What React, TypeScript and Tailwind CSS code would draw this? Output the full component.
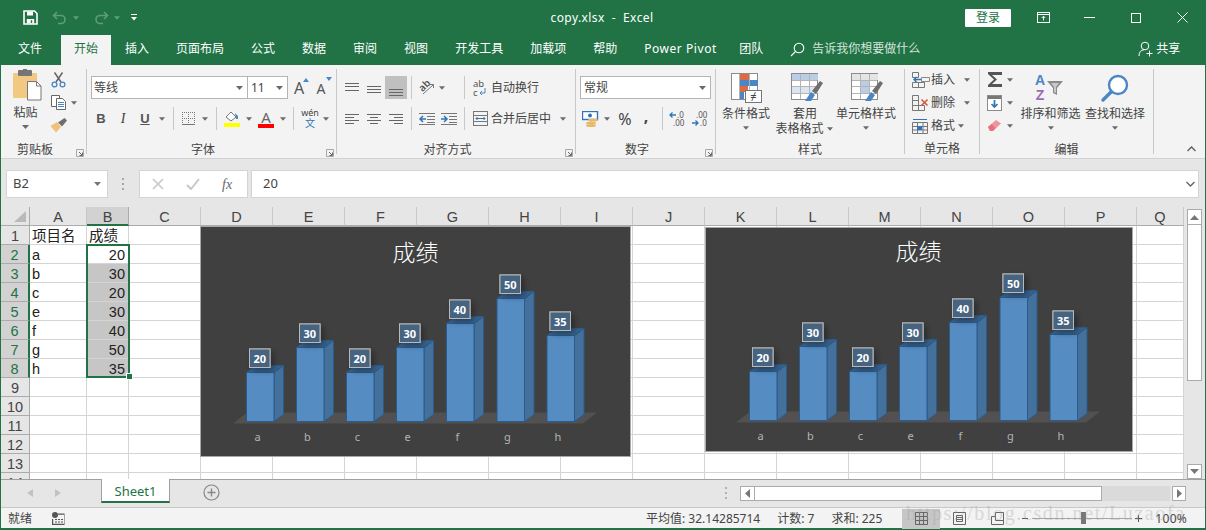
import React from "react";

const Tri = ({ c = "#6a6a6a", w = 7 }: { c?: string; w?: number }) => (
  <svg width={w} height={4} viewBox="0 0 7 4" className="shrink-0"><polygon points="0,0 7,0 3.5,4" fill={c} /></svg>
);
const Sep = () => <div className="w-px h-[23px] bg-[#c8c8c8] shrink-0" />;
const Launcher = () => (
  <svg width="8" height="8" viewBox="0 0 8 8" className="absolute right-[2px] bottom-[-3px]">
    <path d="M.5 7.5V.5h7v7z" fill="none" stroke="#a8a8a8" />
    <path d="M3 3l3 3M3.5 6.5h3v-3" stroke="#666" fill="none" />
  </svg>
);
const Lines = ({ ys, xs }: { ys: number[]; xs: [number, number][] }) => (
  <svg width="14" height="16" viewBox="0 0 14 16">
    {ys.map((y, i) => (
      <line key={i} x1={xs[i % xs.length][0]} x2={xs[i % xs.length][1]} y1={y + 0.5} y2={y + 0.5} stroke="#666" />
    ))}
  </svg>
);

function Group({ w, label, launcher, children }: { w: string; label: string; launcher?: boolean; children: React.ReactNode }) {
  return (
    <div className={"relative h-[85px] shrink-0 border-r border-[#c8c8c8] " + w}>
      <div className="h-[73px]">{children}</div>
      <div className={launcher ? "h-[16px] leading-[16px] text-center text-[12px] pr-[17px]" : "h-[16px] leading-[16px] text-center text-[12px]"}>{label}</div>
      {launcher && <Launcher />}
    </div>
  );
}

const Grid = ({ children }: { children?: React.ReactNode }) => (
  <>
    <rect x=".5" y=".5" width="26" height="26" fill="#fff" stroke="#8c8c8c" />
    {children}
    {[9, 18].map((v) => <line key={v} x1={v + 0.5} x2={v + 0.5} y1="1" y2="26" stroke="#b4b4b4" />)}
    {[7, 13, 20].map((v) => <line key={v} y1={v + 0.5} y2={v + 0.5} x1="1" x2="26" stroke="#b4b4b4" />)}
  </>
);
const BrushOver = () => (
  <>
    <path d="M14 28l6-9 4 3-4 6z" fill="#4a86c5" />
    <path d="M21 18l8-10 3 2-7 11z" fill="#6e6e6e" />
  </>
);

function BarChart({ dx, dy, w, h, ox, oy }: { dx: number; dy: number; w: number; h: number; ox: number; oy: number }) {
  const bars = [
    { v: "20", l: "a", x: 246.5, t: 372.5, lx: 257.5 },
    { v: "30", l: "b", x: 296.5, t: 347.5, lx: 307.5 },
    { v: "20", l: "c", x: 346.5, t: 372.5, lx: 357.5 },
    { v: "30", l: "e", x: 396.5, t: 347.5, lx: 407.5 },
    { v: "40", l: "f", x: 446.5, t: 323.5, lx: 457.5 },
    { v: "50", l: "g", x: 497, t: 298.5, lx: 507.5 },
    { v: "35", l: "h", x: 547, t: 335.5, lx: 558 },
  ];
  const fid = "ls" + dx;
  return (
    <svg width={w} height={h} viewBox={`${ox - dx} ${oy - dy} ${w} ${h}`} className="block">
      <defs>
        <filter id={fid} x="-40%" y="-40%" width="200%" height="200%">
          <feDropShadow dx="3" dy="3" stdDeviation="3" floodColor="#000" floodOpacity="0.35" />
        </filter>
      </defs>
      <polygon points="233,423.5 583,423.5 597,412.5 247,412.5" fill="#525050" />
      <text x="415.5" y="261" textAnchor="middle" fontSize="23" fontWeight="300" fill="#ffffff" fontFamily="'Noto Sans CJK SC',sans-serif">成绩</text>
      {bars.map((b) => {
        const W = 27.5, B = 421.5, D = 9.5, U = 7;
        return (
          <g key={b.l + b.x} stroke="#2a5b8c" strokeWidth="1" strokeLinejoin="round">
            <polygon points={`${b.x + W},${b.t} ${b.x + W + D},${b.t - U} ${b.x + W + D},${B - U} ${b.x + W},${B}`} fill="#44709c" />
            <polygon points={`${b.x},${b.t} ${b.x + D},${b.t - U} ${b.x + W + D},${b.t - U} ${b.x + W},${b.t}`} fill="#38628c" />
            <rect x={b.x} y={b.t} width={W} height={B - b.t} fill="#558dc3" />
          </g>
        );
      })}
      {bars.map((b) => (
        <g key={"l" + b.l + b.x}>
          <rect x={b.x + 3} y={b.t - 23.5} width="20.5" height="18.5" fill="#46637f" stroke="#b9b9b9" filter={`url(#${fid})`} />
          <rect x={b.x + 3} y={b.t - 23.5} width="20.5" height="18.5" fill="#46637f" stroke="#b9b9b9" />
          <text x={b.x + 13.3} y={b.t - 10} textAnchor="middle" fontSize="11" fontWeight="700" fill="#fff" fontFamily="'Noto Sans',sans-serif">{b.v}</text>
          <text x={b.lx} y="441" textAnchor="middle" fontSize="11" fill="#b4b4b4" fontFamily="'Noto Sans',sans-serif">{b.l}</text>
        </g>
      ))}
    </svg>
  );
}

const cols = ["A", "B", "C", "D", "E", "F", "G", "H", "I", "J", "K", "L", "M", "N", "O", "P", "Q"];
const tabs = ["插入", "页面布局", "公式", "数据", "审阅", "视图", "开发工具", "加载项", "帮助"];
const data: Record<number, [string, string]> = {
  1: ["项目名", "成绩"], 2: ["a", "20"], 3: ["b", "30"], 4: ["c", "20"], 5: ["e", "30"], 6: ["f", "40"], 7: ["g", "50"], 8: ["h", "35"],
};
const gridCols = "grid grid-rows-[19px] grid-cols-[29px_57px_42px_repeat(14,72px)_47px]";

export default function App() {
  return (
    <div className="relative w-[1206px] h-[530px] overflow-hidden flex flex-col bg-[#f3f3f3] border-x border-[#217346] text-[#444] text-[12px] font-['Noto_Sans','Noto_Sans_CJK_SC',sans-serif]">
      {/* Title bar */}
      <div className="h-[35px] shrink-0 bg-[#217346] flex items-center text-white">
        <svg width="15" height="15" viewBox="0 0 15 15" className="ml-[22px]">
          <path d="M1 1h10.5L14 3.5V14H1z" fill="none" stroke="#fff" strokeWidth="1.6" />
          <rect x="4" y="1.5" width="6" height="4" fill="#fff" />
          <rect x="3.8" y="9" width="7.4" height="4.5" fill="#fff" />
          <rect x="7.8" y="10.2" width="1.4" height="2.8" fill="#217346" />
        </svg>
        <svg width="16" height="14" viewBox="0 0 16 14" className="ml-[14px]" fill="none" stroke="#5f9c7e" strokeWidth="1.6">
          <path d="M5 1L1.5 4.5 5 8" /><path d="M2 4.5h7a4 4 0 010 8H6" />
        </svg>
        <span className="ml-[5px]"><Tri c="#5f9c7e" w={6} /></span>
        <svg width="16" height="14" viewBox="0 0 16 14" className="ml-[14px]" fill="none" stroke="#5f9c7e" strokeWidth="1.6">
          <path d="M11 1l3.5 3.5L11 8" /><path d="M14 4.5H7a4 4 0 000 8h3" />
        </svg>
        <span className="ml-[5px]"><Tri c="#5f9c7e" w={6} /></span>
        <svg width="6" height="7" viewBox="0 0 6 7" className="ml-[11px]"><rect y="0" width="6" height="1" fill="#fff" /><polygon points="0,3 6,3 3,6.5" fill="#fff" /></svg>
        <div className="ml-[413px] w-[104px] whitespace-pre text-center tracking-[0.4px]">copy.xlsx  -  Excel</div>
        <div className="ml-[311px] w-[46px] h-[18px] bg-white text-[#217346] rounded-[1px] flex items-center justify-center">登录</div>
        <svg width="13" height="11" viewBox="0 0 13 11" className="ml-[26px]" fill="none" stroke="#fff"><rect x=".5" y=".5" width="12" height="10" /><path d="M.5 2.5h12" /><path d="M6.5 8.5v-4M4.7 6l1.8-1.8L8.3 6" /></svg>
        <div className="ml-[34px] w-[11px] h-px bg-white" />
        <div className="ml-[36px] w-[10px] h-[10px] border border-white" />
        <svg width="11" height="11" viewBox="0 0 11 11" className="ml-[36px]" stroke="#fff"><path d="M.5.5l10 10M10.5.5l-10 10" /></svg>
      </div>

      {/* Tabs */}
      <div className="h-[30px] shrink-0 bg-[#217346] flex text-white gap-px pl-[4px]">
        <div className="px-[13px] leading-[28px] mr-[5px]">文件</div>
        <div className="px-[13px] leading-[28px] bg-[#f3f3f3] text-[#217346]">开始</div>
        {tabs.map((t) => <div key={t} className="px-[13px] leading-[28px]">{t}</div>)}
        <div className="px-[13px] leading-[28px] w-[94px] whitespace-nowrap tracking-[0.55px]">Power Pivot</div>
        <div className="px-[13px] leading-[28px]">团队</div>
        <div className="ml-[13px] flex items-center h-[28px]">
          <svg width="15" height="15" viewBox="0 0 15 15" fill="none" stroke="#fff" strokeWidth="1.1"><circle cx="9" cy="6" r="4.8" /><path d="M5.5 9.5L1 14" /></svg>
          <span className="ml-[7px] text-[#d3e4da]">告诉我你想要做什么</span>
        </div>
        <div className="ml-[217px] flex items-center h-[28px]">
          <svg width="16" height="16" viewBox="0 0 16 16" fill="none" stroke="#fff"><circle cx="7" cy="5" r="3.8" /><path d="M1 15c0-4 2-6 5-6.2" /><path d="M11.5 9.5v6M8.5 12.5h6" /></svg>
          <span className="ml-[2px]">共享</span>
        </div>
      </div>

      {/* Ribbon */}
      <div className="h-[94px] shrink-0 bg-[#f3f3f3] border-b border-[#d2d2d2] pt-[4px] flex relative">
        {/* clipboard */}
        <Group w="w-[86px]" label="剪贴板" launcher>
          <div className="flex">
            <div className="w-[49px] flex flex-col items-center">
              <svg width="30" height="32" viewBox="0 0 30 32" className="ml-[5px]">
                <rect x="0" y="4" width="24" height="25" rx="1" fill="#f1c982" />
                <rect x="5" y="1" width="14" height="6" rx="1" fill="#767676" />
                <rect x="10" y="0" width="4" height="3" fill="#767676" />
                <path d="M14.5 12.5h9l4.5 4.5v14h-13.5z" fill="#fff" stroke="#777" />
                <path d="M23.5 12.5v4.5h4.5" fill="none" stroke="#777" />
              </svg>
              <div className="leading-[15px] mt-[4px]">粘贴</div>
              <div className="mt-[5px]"><Tri /></div>
            </div>
            <div className="flex flex-col mt-[-1px]">
              <div className="h-[23px] flex items-center">
                <svg width="15" height="16" viewBox="0 0 15 16" fill="none" className="ml-[1px]">
                  <path d="M5 10L11.5 .5M10 10L3.5 .5" stroke="#666" strokeWidth="1.5" />
                  <circle cx="3.5" cy="12.5" r="2.4" stroke="#4a86c5" strokeWidth="1.3" />
                  <circle cx="11.5" cy="12.5" r="2.4" stroke="#4a86c5" strokeWidth="1.3" />
                </svg>
              </div>
              <div className="h-[23px] flex items-center">
                <svg width="16" height="15" viewBox="0 0 16 15" fill="none" className="ml-[1px]">
                  <path d="M.5.5h8v11h-8z" fill="#fff" stroke="#666" />
                  <path d="M5.5 3.5h6l3 3v8h-9z" fill="#fff" stroke="#666" />
                  <path d="M7 7.5h6M7 9.5h6M7 11.5h6" stroke="#4a86c5" />
                </svg>
                <span className="ml-[4px]"><Tri w={6} /></span>
              </div>
              <div className="h-[23px] flex items-center">
                <svg width="17" height="15" viewBox="0 0 17 15">
                  <path d="M.5 8L7 4l4 5-5 5.5z" fill="#efc27c" />
                  <path d="M8 4.5L14.5 0 17 2.5l-5 6z" fill="#6e6e6e" />
                </svg>
              </div>
            </div>
          </div>
        </Group>

        {/* font */}
        <Group w="w-[250px]" label="字体" launcher>
          <div className="pt-[7px] flex flex-col gap-[8px]">
            <div className="h-[23px] flex items-center pl-[4px]">
              <div className="w-[157px] h-[23px] bg-white border border-[#b4b4b4] flex items-center justify-between pl-[2px] pr-[4px]"><span>等线</span><Tri /></div>
              <div className="w-[40px] h-[23px] bg-white border border-l-0 border-[#b4b4b4] flex items-center justify-between pl-[3px] pr-[4px]"><span>11</span><Tri /></div>
              <div className="w-[22px] relative flex justify-center text-[16px] leading-[20px] text-[#555]">A<svg width="6" height="4" viewBox="0 0 6 4" className="absolute right-[1px] top-0"><polygon points="0,4 6,4 3,0" fill="#4a86c5" /></svg></div>
              <div className="w-[22px] relative flex justify-center text-[14px] leading-[20px] text-[#555] pt-[2px]">A<svg width="6" height="4" viewBox="0 0 6 4" className="absolute right-0 top-0"><polygon points="0,0 6,0 3,4" fill="#4a86c5" /></svg></div>
            </div>
            <div className="h-[23px] flex items-center pl-[3px]">
              <div className="w-[22px] text-center text-[13px] font-bold text-[#555] font-['Liberation_Sans',sans-serif]">B</div>
              <div className="w-[22px] text-center italic font-['Liberation_Serif',serif] text-[14px]">I</div>
              <div className="w-[22px] text-center text-[13px] underline font-bold text-[#555] font-['Liberation_Sans',sans-serif]">U</div>
              <div className="w-[12px] flex justify-center"><Tri w={6} /></div>
              <div className="ml-[5px]"><Sep /></div>
              <div className="ml-[3px] w-[22px] flex justify-center">
                <svg width="13" height="13" viewBox="0 0 13 13" fill="none" stroke="#777" strokeDasharray="1 1"><path d="M.5 0v13M6.5 0v13M12.5 0v13M0 .5h13M0 6.5h13" /><path d="M0 12.5h13" strokeDasharray="none" /></svg>
              </div>
              <div className="w-[12px] flex justify-center"><Tri w={6} /></div>
              <div className="ml-[5px]"><Sep /></div>
              <div className="ml-[4px] w-[22px] flex justify-center">
                <svg width="16" height="16" viewBox="0 0 16 16">
                  <path d="M2 6l5-5 5 5-5 4z" fill="#fff" stroke="#777" />
                  <path d="M11 2l3 3v3h-2z" fill="#4a86c5" />
                  <rect x="0" y="12" width="16" height="4" fill="#ffff00" />
                </svg>
              </div>
              <div className="w-[12px] flex justify-center"><Tri w={6} /></div>
              <div className="w-[22px] flex flex-col items-center">
                <span className="text-[15px] leading-[14px] text-[#666]">A</span>
                <span className="w-[16px] h-[4px] bg-[#ff0000]" />
              </div>
              <div className="w-[12px] flex justify-center"><Tri w={6} /></div>
              <div className="ml-[4px]"><Sep /></div>
              <div className="ml-[5px] w-[22px] flex flex-col items-center leading-none">
                <span className="text-[9px] leading-[10px]">wén</span>
                <span className="text-[10px] leading-[11px] text-[#2f75b5]">文</span>
              </div>
              <div className="w-[10px] flex justify-center"><Tri w={6} /></div>
            </div>
          </div>
        </Group>

        {/* align */}
        <Group w="w-[239px]" label="对齐方式" launcher>
          <div className="pt-[7px] flex flex-col gap-[8px]">
            <div className="h-[23px] flex items-center pl-[4px]">
              <div className="w-[22px] flex justify-center"><Lines ys={[3, 6, 10]} xs={[[0, 14]]} /></div>
              <div className="w-[22px] flex justify-center"><Lines ys={[6, 9, 12]} xs={[[0, 14]]} /></div>
              <div className="w-[22px] h-[23px] bg-[#c0c0c0] flex justify-center items-center"><div className="mt-[2px]"><Lines ys={[8, 11, 14]} xs={[[0, 14]]} /></div></div>
              <div className="ml-[4px]"><Sep /></div>
              <div className="ml-[4px] w-[22px] flex justify-center">
                <svg width="20" height="20" viewBox="0 0 20 20">
                  <text x="3" y="12" fontSize="10" fontWeight="600" fill="#555" transform="rotate(-45 7 10)" fontFamily="'Noto Sans',sans-serif">ab</text>
                  <path d="M6 16L16 7" stroke="#777" fill="none" /><path d="M13 6.5h3.5V10" stroke="#777" fill="none" />
                </svg>
              </div>
              <div className="w-[8px] flex justify-center"><Tri w={6} /></div>
              <div className="ml-[18px]"><Sep /></div>
              <div className="ml-[4px] w-[22px] flex justify-center">
                <svg width="16" height="18" viewBox="0 0 16 18">
                  <text x="1" y="8" fontSize="9.5" fill="#555" fontFamily="'Noto Sans',sans-serif">ab</text>
                  <text x="1" y="17" fontSize="9.5" fill="#555" fontFamily="'Noto Sans',sans-serif">c</text>
                  <path d="M13 9v5H8M10 12l-2 2 2 2" stroke="#4a86c5" fill="none" />
                </svg>
              </div>
              <div>自动换行</div>
            </div>
            <div className="h-[23px] flex items-center pl-[4px]">
              <div className="w-[22px] flex justify-center"><Lines ys={[3, 6, 9, 12]} xs={[[0, 14], [0, 9]]} /></div>
              <div className="w-[22px] flex justify-center"><Lines ys={[3, 6, 9, 12]} xs={[[0, 14], [3, 11]]} /></div>
              <div className="w-[22px] flex justify-center"><Lines ys={[3, 6, 9, 12]} xs={[[0, 14], [5, 14]]} /></div>
              <div className="ml-[4px]"><Sep /></div>
              <div className="ml-[4px] w-[22px] flex justify-center">
                <svg width="16" height="12" viewBox="0 0 16 12" fill="none"><path d="M0 .5h16M8 3.5h8M8 6.5h8M8 9.5h8M0 11.5h16" stroke="#777" /><path d="M7 6H1M4 3L1 6l3 3" stroke="#2f75b5" strokeWidth="1.5" /></svg>
              </div>
              <div className="w-[22px] flex justify-center">
                <svg width="16" height="12" viewBox="0 0 16 12" fill="none"><path d="M0 .5h16M8 3.5h8M8 6.5h8M8 9.5h8M0 11.5h16" stroke="#777" /><path d="M0 6h6M3 3l3 3-3 3" stroke="#2f75b5" strokeWidth="1.5" /></svg>
              </div>
              <div className="ml-[4px]"><Sep /></div>
              <div className="ml-[4px] w-[22px] flex justify-center">
                <svg width="15" height="15" viewBox="0 0 15 15" fill="none"><rect x=".5" y=".5" width="14" height="14" stroke="#777" /><path d="M.5 4.5h14M.5 10.5h14" stroke="#777" /><path d="M3 7.5h9M4.5 6L3 7.5 4.5 9M10.5 6L12 7.5 10.5 9" stroke="#2f75b5" /></svg>
              </div>
              <div>合并后居中</div>
              <div className="ml-[6px] w-[12px] flex justify-center"><Tri w={6} /></div>
            </div>
          </div>
        </Group>

        {/* number */}
        <Group w="w-[140px]" label="数字" launcher>
          <div className="pt-[7px] flex flex-col gap-[8px]">
            <div className="h-[23px] pl-[4px]">
              <div className="w-[131px] h-[23px] bg-white border border-[#b4b4b4] flex items-center justify-between pl-[3px] pr-[4px]"><span>常规</span><Tri /></div>
            </div>
            <div className="h-[23px] flex items-center pl-[2px]">
              <div className="w-[24px] flex justify-center">
                <svg width="17" height="16" viewBox="0 0 17 16">
                  <rect x=".5" y=".5" width="15" height="8" fill="#fff" stroke="#2f75b5" strokeWidth="1.4" />
                  <circle cx="8" cy="4.5" r="2" fill="#2f75b5" />
                  <ellipse cx="11" cy="9" rx="5" ry="1.6" fill="#e8b96a" /><ellipse cx="9" cy="12" rx="5" ry="1.6" fill="#e8b96a" /><ellipse cx="9" cy="14.5" rx="5" ry="1.5" fill="#e8b96a" />
                </svg>
              </div>
              <div className="w-[10px] flex justify-center"><Tri w={6} /></div>
              <div className="ml-[2px] w-[22px] text-center text-[16px] leading-[20px]">%</div>
              <div className="w-[20px] text-center text-[16px] font-bold leading-[16px] pb-[6px]">,</div>
              <div className="ml-[6px]"><Sep /></div>
              <div className="ml-[4px] w-[22px] flex justify-center">
                <svg width="18" height="16" viewBox="0 0 18 16"><path d="M7 4H1M3.5 1.5L1 4l2.5 2.5" stroke="#2f75b5" fill="none" strokeWidth="1.3" /><text x="8" y="7" fontSize="8" fill="#555" fontFamily="'Noto Sans',sans-serif">.0</text><text x="4" y="15" fontSize="8" fill="#555" fontFamily="'Noto Sans',sans-serif">.00</text></svg>
              </div>
              <div className="w-[22px] flex justify-center">
                <svg width="18" height="16" viewBox="0 0 18 16"><text x="5" y="7" fontSize="8" fill="#555" fontFamily="'Noto Sans',sans-serif">.00</text><path d="M1 12h6M4.5 9.5L7 12l-2.5 2.5" stroke="#2f75b5" fill="none" strokeWidth="1.3" /><text x="9" y="15" fontSize="8" fill="#555" fontFamily="'Noto Sans',sans-serif">.0</text></svg>
              </div>
            </div>
          </div>
        </Group>

        {/* styles */}
        <Group w="w-[189px]" label="样式">
          <div className="flex pt-[4px]">
            <div className="w-[60px] flex flex-col items-center">
              <svg width="31" height="30" viewBox="0 0 31 30">
                <rect x=".5" y=".5" width="26" height="26" fill="#fff" stroke="#8c8c8c" />
                <rect x="8" y="1" width="10" height="6" fill="#db6b43" />
                <rect x="8" y="7" width="19" height="6" fill="#4a86c5" />
                <rect x="8" y="13" width="9" height="6" fill="#db6b43" />
                <rect x="8" y="19" width="5" height="7" fill="#4a86c5" />
                <path d="M8.5 1v25M18.5 1v25" stroke="#b4b4b4" />
                <rect x="14.5" y="17.5" width="16" height="12" fill="#fff" stroke="#777" />
                <text x="22.5" y="27" textAnchor="middle" fontSize="11" fill="#444" fontFamily="'Noto Sans',sans-serif">≠</text>
              </svg>
              <div className="mt-[3px] leading-[15px]">条件格式</div>
              <div className="mt-[5px]"><Tri w={6} /></div>
            </div>
            <div className="w-[58px] flex flex-col items-center">
              <svg width="33" height="30" viewBox="0 0 33 30" className="ml-[4px]">
                <Grid><rect x="1" y="1" width="26" height="6" fill="#b9cde5" /><rect x="1" y="13" width="26" height="7" fill="#dce6f1" /></Grid>
                <BrushOver />
              </svg>
              <div className="mt-[3px] leading-[15px]">套用</div>
              <div className="leading-[15px] flex items-center gap-[3px] ml-[-2px] whitespace-nowrap">表格格式<Tri w={6} /></div>
            </div>
            <div className="w-[64px] flex flex-col items-center">
              <svg width="33" height="30" viewBox="0 0 33 30" className="ml-[3px]">
                <Grid><rect x="1" y="1" width="26" height="6" fill="#e4e4e4" /><rect x="9" y="7" width="9" height="13" fill="#b9cde5" /></Grid>
                <BrushOver />
              </svg>
              <div className="mt-[3px] leading-[15px] whitespace-nowrap">单元格样式</div>
              <div className="mt-[5px]"><Tri w={6} /></div>
            </div>
          </div>
        </Group>

        {/* cells */}
        <Group w="w-[75px]" label="单元格">
          <div className="pl-[7px] flex flex-col mt-[-1px]">
            <div className="h-[23px] flex items-center">
              <svg width="18" height="16" viewBox="0 0 18 16" fill="none" stroke="#777"><path d="M.5.5h6v5h-6zM.5 10.5h6v5h-6zM6.5 10.5h6v5h-6z" /><path d="M9.5 5.5h8v4h-8z" stroke="#888" /><path d="M9 7.5H2M4.5 5L2 7.5 4.5 10" stroke="#2f75b5" strokeWidth="1.4" /></svg>
              <span className="ml-[1px]">插入</span>
              <span className="ml-[9px]"><Tri w={6} /></span>
            </div>
            <div className="h-[23px] flex items-center">
              <svg width="18" height="16" viewBox="0 0 18 16" fill="none" stroke="#777"><path d="M.5.5h6v5h-6zM.5 10.5h6v5h-6zM6.5 10.5h6v5h-6zM.5 5.5h6v5h-6z" /><path d="M9.5 4.5l6 6M15.5 4.5l-6 6" stroke="#d9573a" strokeWidth="1.6" /></svg>
              <span className="ml-[1px]">删除</span>
              <span className="ml-[9px]"><Tri w={6} /></span>
            </div>
            <div className="h-[23px] flex items-center">
              <svg width="18" height="16" viewBox="0 0 18 16" fill="none" stroke="#777"><path d="M.5 4.5h15v11H.5zM.5 8.5h15M.5 12h15M5.5 4.5v11M11 4.5v11" /><rect x="5" y="8" width="5" height="4" fill="#2f75b5" stroke="none" /><path d="M1 1.5h14" stroke="#2f75b5" /></svg>
              <span className="ml-[1px]">格式</span>
              <span className="ml-[3px]"><Tri w={6} /></span>
            </div>
          </div>
        </Group>

        {/* editing */}
        <Group w="w-[174px]" label="编辑">
          <div className="flex">
            <div className="w-[39px] pl-[7px] flex flex-col mt-[-1px]">
              <div className="h-[23px] flex items-center">
                <svg width="16" height="15" viewBox="0 0 16 15"><path d="M1 0h14v3H5l5 4.5L5 12h10v3H1v-2l6-5.5L1 2z" fill="#555" /></svg>
                <span className="ml-[4px]"><Tri w={6} /></span>
              </div>
              <div className="h-[23px] flex items-center">
                <svg width="15" height="16" viewBox="0 0 15 16" fill="none"><rect x=".5" y=".5" width="14" height="15" fill="#fff" stroke="#8c8c8c" /><rect x="1" y="1" width="13" height="3" fill="#777" /><path d="M7.5 5v7M4.5 9l3 3 3-3" stroke="#2f75b5" strokeWidth="1.7" /></svg>
                <span className="ml-[5px]"><Tri w={6} /></span>
              </div>
              <div className="h-[23px] flex items-center">
                <svg width="15" height="13" viewBox="0 0 15 13"><path d="M1 8l8-7 5 3.5-8 7.5H3z" fill="#f0939e" /><path d="M1 8l3.5-3 4 4L6 12H3z" fill="#e5727f" /></svg>
                <span className="ml-[5px]"><Tri w={6} /></span>
              </div>
            </div>
            <div className="w-[63px] flex flex-col items-center pt-[4px]">
              <svg width="30" height="30" viewBox="0 0 30 30" className="mr-[3px]">
                <text x="6" y="12" textAnchor="middle" fontSize="14" fontWeight="700" fill="#4a86c5" fontFamily="'Liberation Sans',sans-serif">A</text>
                <text x="6" y="27" textAnchor="middle" fontSize="14" fontWeight="700" fill="#9b6bb5" fontFamily="'Liberation Sans',sans-serif">Z</text>
                <path d="M13 8h16l-6 7v7l-4-2v-5z" fill="#8a8a8a" />
                <path d="M17 10h8l-3 4v6l-2-1v-5z" fill="#c9c9c9" />
              </svg>
              <div className="mt-[3px] leading-[15px] whitespace-nowrap">排序和筛选</div>
              <div className="mt-[5px]"><Tri w={6} /></div>
            </div>
            <div className="w-[66px] flex flex-col items-center pt-[4px]">
              <svg width="30" height="30" viewBox="0 0 30 30">
                <circle cx="18" cy="12" r="9" fill="#fff" stroke="#4a86c5" strokeWidth="2.4" />
                <path d="M11 19l-8 8" stroke="#4a86c5" strokeWidth="3.4" strokeLinecap="round" />
              </svg>
              <div className="mt-[3px] leading-[15px] whitespace-nowrap">查找和选择</div>
              <div className="mt-[5px]"><Tri w={6} /></div>
            </div>
          </div>
        </Group>

        <svg width="9" height="6" viewBox="0 0 9 6" fill="none" stroke="#666" strokeWidth="1.5" className="absolute right-[9px] bottom-[6px]"><path d="M.5 5L4.5 1l4 4" /></svg>
      </div>

      {/* Formula bar */}
      <div className="h-[48px] shrink-0 bg-[#e6e6e6] flex items-start pt-[11px] pl-[5px]">
        <div className="w-[102px] h-[28px] bg-white border border-[#d4d4d4] flex items-center justify-between pl-[6px] pr-[6px] text-[13px]">
          <span>B2</span><Tri c="#777" />
        </div>
        <div className="w-[31px] h-[28px] flex items-center justify-center">
          <svg width="3" height="12" viewBox="0 0 3 12" fill="#a8a8a8"><rect y="0" width="2" height="2" /><rect y="5" width="2" height="2" /><rect y="10" width="2" height="2" /></svg>
        </div>
        <div className="w-[109px] h-[28px] bg-white border border-[#d4d4d4] flex items-center">
          <svg width="12" height="12" viewBox="0 0 12 12" className="ml-[12px]" stroke="#c8c8c8" strokeWidth="1.6"><path d="M1 1l10 10M11 1L1 11" /></svg>
          <svg width="14" height="12" viewBox="0 0 14 12" className="ml-[22px]" fill="none" stroke="#c8c8c8" strokeWidth="2"><path d="M1 7l4 4 8-10" /></svg>
          <span className="ml-[22px] italic font-['Liberation_Serif',serif] text-[14px] text-[#666]">fx</span>
        </div>
        <div className="ml-[3px] w-[948px] h-[28px] bg-white border border-[#d4d4d4] flex items-center justify-between pl-[11px] pr-[3px] text-[13px]">
          <span>20</span>
          <svg width="9" height="6" viewBox="0 0 9 6" fill="none" stroke="#666" strokeWidth="1.4"><path d="M.5 1l4 4 4-4" /></svg>
        </div>
      </div>

      {/* Sheet */}
      <div className="h-[272px] shrink-0 flex bg-[#e6e6e6] overflow-hidden">
        <div className="relative w-[1183px] shrink-0 overflow-hidden font-['Liberation_Sans','Noto_Sans_CJK_SC',sans-serif] text-[14.5px] text-[#222]">
          {/* header */}
          <div className={gridCols + " h-[19px] bg-[#e6e6e6] text-[#444] leading-[20px]"}>
            <div className="border-r border-[#ababab] flex items-end justify-end pb-[3px] pr-[3px] border-b">
              <svg width="12" height="11" viewBox="0 0 12 11"><polygon points="0,11 12,11 12,0" fill="#b9b9b9" /></svg>
            </div>
            {cols.map((c) => (
              <div key={c} className={c === "B" ? "text-center bg-[#d2d2d2] border-b-2 border-[#217346] border-r border-r-[#ababab]" : "text-center border-b border-[#ababab] border-r border-r-[#c8c8c8]"}>{c}</div>
            ))}
          </div>
          {/* rows */}
          {Array.from({ length: 14 }, (_, i) => i + 1).map((r) => {
            const sel = r >= 2 && r <= 8;
            const d = data[r];
            return (
              <div key={r} className={gridCols + " h-[19px] leading-[20px]"}>
                <div className={sel ? "text-center bg-[#d2d2d2] text-[#217346] border-r-2 border-[#217346] border-b border-b-[#ababab]" : "text-center bg-[#e6e6e6] text-[#444] border-r border-[#ababab] border-b border-b-[#ababab]"}>{r}</div>
                <div className="bg-white border-r border-b border-[#d4d4d4] pl-[2px] whitespace-nowrap">{d ? d[0] : ""}</div>
                <div className={r >= 3 && r <= 8 ? "bg-[#c6c6c6] border-r border-b border-[#d4d4d4] text-right pr-[3px]" : r === 1 ? "bg-white border-r border-b border-[#d4d4d4] pl-[2px] whitespace-nowrap" : r === 2 ? "bg-white border-r border-b border-[#d4d4d4] text-right pr-[3px]" : "bg-white border-r border-b border-[#d4d4d4]"}>{d ? d[1] : ""}</div>
                {cols.slice(2).map((c) => <div key={c} className="bg-white border-r border-b border-[#d4d4d4]" />)}
              </div>
            );
          })}
          {/* selection */}
          <div className="absolute left-[85px] top-[37px] w-[44px] h-[134px] border-2 border-[#217346]" />
          <div className="absolute left-[126px] top-[167px] w-[5px] h-[5px] bg-[#217346] outline outline-1 outline-white" />
          {/* charts */}
          <div className="absolute left-[199px] top-[19px] w-[431px] h-[231px] bg-[#404040] border border-[#a8a8a8] overflow-hidden">
            <BarChart dx={0} dy={0} w={429} h={229} ox={201} oy={227} />
          </div>
          <div className="absolute left-[704px] top-[20px] w-[428px] h-[225px] bg-[#404040] border border-[#a8a8a8] overflow-hidden">
            <BarChart dx={503} dy={-1} w={426} h={223} ox={706} oy={228} />
          </div>
        </div>
        {/* vertical scrollbar */}
        <div className="w-[21px] shrink-0 pl-[3px] pt-[2px] flex flex-col">
          <div className="w-[15px] h-[16px] bg-white border border-[#ababab] flex items-center justify-center">
            <svg width="9" height="5" viewBox="0 0 9 5"><polygon points="0,5 9,5 4.5,0" fill="#777" /></svg>
          </div>
          <div className="w-[15px] h-[156px] bg-white border border-t-0 border-[#ababab]" />
          <div className="flex-1" />
          <div className="w-[15px] h-[15px] bg-white border border-[#ababab] flex items-center justify-center">
            <svg width="9" height="5" viewBox="0 0 9 5"><polygon points="0,0 9,0 4.5,5" fill="#777" /></svg>
          </div>
        </div>
      </div>

      {/* Sheet tabs */}
      <div className="h-[28px] shrink-0 bg-[#e6e6e6] border-t border-[#9f9f9f] flex items-start">
        <svg width="6" height="8" viewBox="0 0 6 8" className="ml-[26px] mt-[9px]"><polygon points="6,0 6,8 0,4" fill="#c2c2c2" /></svg>
        <svg width="6" height="8" viewBox="0 0 6 8" className="ml-[22px] mt-[9px]"><polygon points="0,0 0,8 6,4" fill="#c2c2c2" /></svg>
        <div className="ml-[40px] w-[69px] h-[24px] mt-[-1px] bg-white border-x border-[#9f9f9f] border-b-2 border-b-[#217346] text-[#217346] text-[13px] flex items-center justify-center pt-[3px]">Sheet1</div>
        <svg width="17" height="17" viewBox="0 0 17 17" className="ml-[33px] mt-[4px]" fill="none" stroke="#888"><circle cx="8.5" cy="8.5" r="7.5" strokeWidth="1.2" /><path d="M8.5 4.5v8M4.5 8.5h8" strokeWidth="1.4" /></svg>
        <svg width="3" height="12" viewBox="0 0 3 12" fill="#b0b0b0" className="ml-[505px] mt-[7px]"><rect width="2" height="2" /><rect y="5" width="2" height="2" /><rect y="10" width="2" height="2" /></svg>
        <div className="ml-[12px] mt-[6px] w-[446px] h-[15px] flex">
          <div className="w-[15px] h-[15px] bg-white border border-[#ababab] flex items-center justify-center">
            <svg width="5" height="9" viewBox="0 0 5 9"><polygon points="5,0 5,9 0,4.5" fill="#777" /></svg>
          </div>
          <div className="w-[348px] h-[15px] bg-white border-y border-r border-[#ababab]" />
          <div className="w-[68px] h-[15px] bg-[#dadada]" />
          <div className="ml-[2px] w-[14px] h-[15px] bg-white border border-[#ababab] flex items-center justify-center">
            <svg width="5" height="9" viewBox="0 0 5 9"><polygon points="0,0 0,9 5,4.5" fill="#777" /></svg>
          </div>
        </div>
      </div>

      {/* Status bar */}
      <div className="h-[23px] shrink-0 bg-[#f3f3f3] border-t border-[#c8c8c8] border-b-2 border-b-[#217346] flex items-center pt-[1px]">
        <span className="ml-[7px]">就绪</span>
        <svg width="13" height="13" viewBox="0 0 13 13" className="ml-[20px]" fill="#555"><circle cx="3" cy="3" r="3" /><path d="M6 1.5h6.5V13H0V7h1.2v4.8H12V2.7H6z" /><path d="M3 7h2v1H3zM6 7h2v1H6zM9 7h2v1H9zM3 9.5h2v1H3zM6 9.5h2v1H6zM9 9.5h2v1H9z" /></svg>
        <span className="ml-[581px] whitespace-nowrap">平均值: 32.14285714</span>
        <span className="ml-[17px] whitespace-nowrap">计数: 7</span>
        <span className="ml-[17px] whitespace-nowrap">求和: 225</span>
        <div className="ml-[20px] w-[38px] h-[20px] bg-[#c6c6c6] flex items-center justify-center">
          <svg width="13" height="13" viewBox="0 0 13 13" fill="none" stroke="#666"><path d="M.5.5h12v12H.5zM4.5.5v12M8.5.5v12M.5 4.5h12M.5 8.5h12" /></svg>
        </div>
        <svg width="13" height="13" viewBox="0 0 13 13" className="ml-[13px]" fill="none" stroke="#666"><path d="M.5.5h12v12H.5zM3.5 3.5h6v6h-6zM3.5 5.5h6M3.5 7.5h6" /></svg>
        <svg width="13" height="13" viewBox="0 0 13 13" className="ml-[25px]" fill="none" stroke="#666"><path d="M.5 4.5V12.5h12V.5H4.5v8h8M.5 4.5h4" /></svg>
        <div className="ml-[18px] w-[6px] h-px bg-[#555]" />
        <div className="ml-[4px] relative w-[100px] h-px bg-[#a6a6a6]">
          <div className="absolute left-[49px] top-[-6px] w-[5px] h-[12px] bg-[#777]" />
        </div>
        <svg width="7" height="7" viewBox="0 0 7 7" className="ml-[3px]" stroke="#555"><path d="M3.5 0v7M0 3.5h7" /></svg>
        <span className="ml-[13px] tracking-[0.3px]">100%</span>
      </div>

      {/* watermark */}
      <div className="absolute left-[905px] top-[498px] whitespace-nowrap text-[20px] tracking-[1.6px] text-[#a0a0a0]/35 font-['Liberation_Serif',serif] pointer-events-none">https://blog.csdn.net/Luzaofa</div>
    </div>
  );
}
